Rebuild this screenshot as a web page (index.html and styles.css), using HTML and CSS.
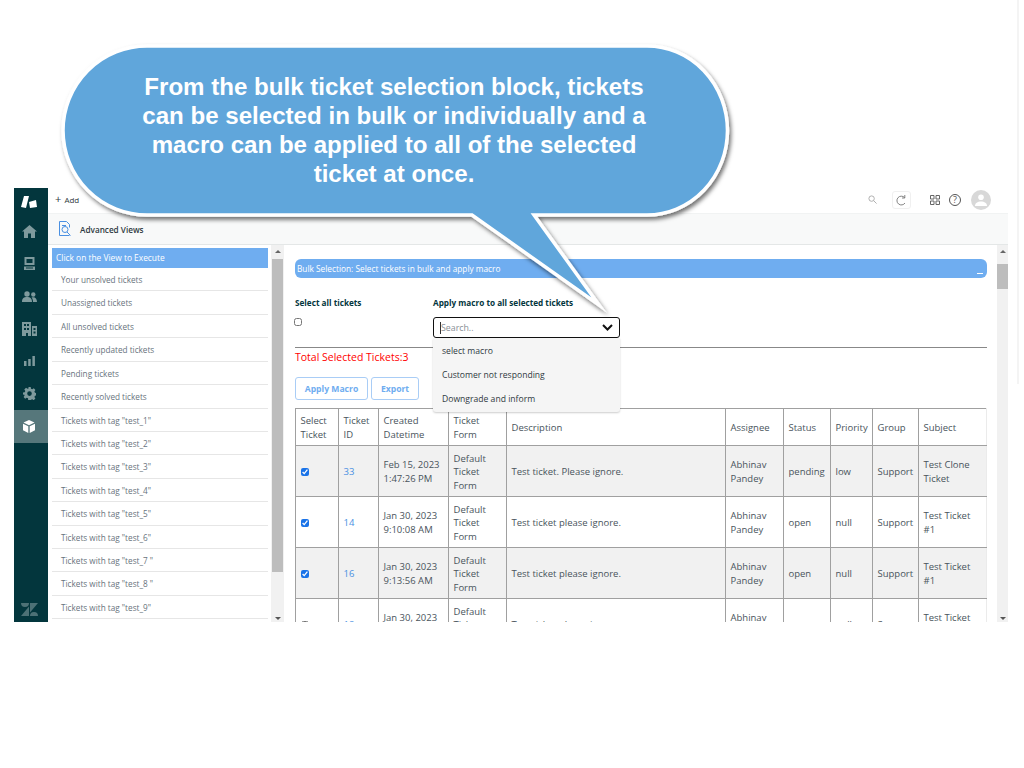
FILE: index.html
```html
<!DOCTYPE html>
<html lang="en">
<head>
<meta charset="utf-8">
<title>Advanced Views</title>
<link rel="stylesheet" href="styles.css">
</head>
<body>
<div class="edge-line"></div>
<div class="app">
  <nav class="rail">
    <div class="rail-item logo">
      <svg width="16" height="12" viewBox="0 0 16 12"><path d="M3 0H8L5 12L0 11z" fill="#fff"/><path d="M8 6l7-2 1 7-7 1z" fill="#fff"/></svg>
    </div>
    <div class="rail-item">
      <svg width="15" height="13" viewBox="0 0 15 13"><path d="M7.500 0L15 6.500h-2V13H9V8.500H6V13H2V6.500H0z" class="ic"/></svg>
    </div>
    <div class="rail-item">
      <svg width="11" height="13" viewBox="0 0 11 13"><path d="M1.500 1h8v6h-8z" fill="none" stroke="#7f9a9d" stroke-width="2"/><path d="M0 9.500h11V13H0z" class="ic"/><path d="M2 11h7" stroke="#03363d"/></svg>
    </div>
    <div class="rail-item">
      <svg width="15" height="11" viewBox="0 0 15 11"><circle cx="5" cy="3" r="2.700" class="ic"/><circle cx="11.300" cy="3.500" r="2.200" class="ic"/><path d="M0 11c0-4 2-5 5-5s5 1 5 5zM11 11c0-2-.5-3.500-1.500-4.500 3-1 5.500.5 5.500 4.500z" class="ic"/></svg>
    </div>
    <div class="rail-item">
      <svg width="15" height="14" viewBox="0 0 15 14"><path d="M0 0h9v14H6v-3H4v3H0zM2 2v2h2V2zm3 0v2h2V2zM2 6v2h2V6zm3 0v2h2V6zM10 4h5v10h-5zm1.500 2v2h2V6zm0 3.500v2h2v-2z" class="ic" fill-rule="evenodd"/></svg>
    </div>
    <div class="rail-item">
      <svg width="11" height="10" viewBox="0 0 11 10"><path d="M0 5h2.500v5H0zM4.200 3h2.500v7H4.200zM8.400 0h2.500v10H8.400z" class="ic"/></svg>
    </div>
    <div class="rail-item">
      <svg width="13" height="13" viewBox="0 0 13 13"><path d="M5.300 0h2.400l.3 1.700 1.300.6 1.500-1 1.600 1.700-1 1.400.6 1.400 1.700.3v2.400l-1.700.3-.6 1.300 1 1.500-1.700 1.600-1.400-1-1.400.6-.3 1.700H5.300L5 11.300l-1.300-.6-1.500 1-1.600-1.700 1-1.400-.6-1.400L0 7.900V5.500l1.700-.3.6-1.300-1-1.500L3 .8l1.400 1 1.400-.6zM6.500 4.300a2.300 2.300 0 1 0 0 4.600 2.300 2.300 0 0 0 0-4.600z" class="ic" fill-rule="evenodd"/></svg>
    </div>
    <div class="rail-item active">
      <svg width="12" height="13" viewBox="0 0 12 13"><path d="M6 0l5.500 2.600L6 5.200.5 2.600zM0 3.800l5.300 2.500V13L0 10.200zM12 3.800L6.700 6.300V13l5.300-2.800z" fill="#fff"/></svg>
    </div>
    <div class="rail-spacer"></div>
    <div class="rail-item zlogo">
      <svg width="17" height="13" viewBox="0 0 17 13"><path d="M0 0h8a4 4 0 0 1-8 0zM8 3.600V13H0zM9 0h8L9 9.400zM9 13a4 4 0 0 1 8 0z" class="ic-dim"/></svg>
    </div>
  </nav>

  <div class="workspace">
    <header class="topbar">
      <span class="add"><span class="plus">+</span> Add</span>
      <div class="top-tools">
        <svg class="t-search" width="9" height="9" viewBox="0 0 10 10"><circle cx="4" cy="4" r="3" fill="none" stroke="#a8a8a8"/><path d="M6.300 6.300L9.500 9.500" stroke="#a8a8a8"/></svg>
        <span class="refresh">
          <svg width="11" height="11" viewBox="0 0 11 11"><path d="M8.500 2.500A4.400 4.400 0 1 0 9 8" fill="none" stroke="#666" stroke-width=".8"/><path d="M8.800 0v3H6" fill="none" stroke="#666" stroke-width=".8"/></svg>
        </span>
        <svg class="t-grid" width="10" height="10" viewBox="0 0 10 10"><path d="M.5.500h3.500v3.500H.5zM6 .5h3.500v3.500H6zM.5 6h3.500v3.500H.5zM6 6h3.500v3.500H6z" fill="none" stroke="#666"/></svg>
        <span class="help">?</span>
        <span class="avatar">
          <svg width="12" height="12" viewBox="0 0 12 12"><circle cx="6" cy="3.300" r="2.800" fill="#fff"/><path d="M0 12c0-3 2.500-4.500 6-4.500S12 9 12 12z" fill="#fff"/></svg>
        </span>
      </div>
    </header>
    <div class="titlebar">
      <svg width="13" height="16" viewBox="0 0 13 16"><path d="M10.500 14.500H.5V.5h7l3 3v3" fill="none" stroke="#4a90e2"/><circle cx="6" cy="8.500" r="3" fill="none" stroke="#4a90e2"/><path d="M8 11l3.500 3.500M3 4.500h4" stroke="#4a90e2"/></svg>
      <span class="title">Advanced Views</span>
    </div>
    <div class="content">
      <aside class="views">
        <div class="views-head">Click on the View to Execute</div>
        <div class="view">Your unsolved tickets</div>
        <div class="view">Unassigned tickets</div>
        <div class="view">All unsolved tickets</div>
        <div class="view">Recently updated tickets</div>
        <div class="view">Pending tickets</div>
        <div class="view">Recently solved tickets</div>
        <div class="view">Tickets with tag "test_1"</div>
        <div class="view">Tickets with tag "test_2"</div>
        <div class="view">Tickets with tag "test_3"</div>
        <div class="view">Tickets with tag "test_4"</div>
        <div class="view">Tickets with tag "test_5"</div>
        <div class="view">Tickets with tag "test_6"</div>
        <div class="view">Tickets with tag "test_7 "</div>
        <div class="view">Tickets with tag "test_8 "</div>
        <div class="view">Tickets with tag "test_9"</div>
      </aside>
      <div class="scrollbar left-bar"><span class="arrow up"></span><span class="thumb"></span><span class="arrow down"></span></div>
      <main class="panel">
        <div class="bulk-bar"><span>Bulk Selection: Select tickets in bulk and apply macro</span><span class="minimize"></span></div>
        <div class="selectors">
          <div class="sel-all">
            <div class="label">Select all tickets</div>
            <input class="check" type="checkbox">
          </div>
          <div class="sel-macro">
            <div class="label">Apply macro to all selected tickets</div>
            <div class="search-box">
              <span class="caret"></span><span class="ph">Search..</span>
              <svg width="11" height="7" viewBox="0 0 11 7"><path d="M1 1l4.500 4.500L10 1" fill="none" stroke="#111" stroke-width="2"/></svg>
            </div>
            <div class="menu">
              <div class="menu-item">select macro</div>
              <div class="menu-item">Customer not responding</div>
              <div class="menu-item">Downgrade and inform</div>
            </div>
          </div>
        </div>
        <hr class="rule">
        <div class="total">Total Selected Tickets:3</div>
        <div class="actions">
          <button class="btn b1">Apply Macro</button>
          <button class="btn b2">Export</button>
        </div>
        <table class="grid">
          <colgroup>
            <col class="c1"><col class="c2"><col class="c3"><col class="c4"><col class="c5"><col class="c6"><col class="c7"><col class="c8"><col class="c9"><col class="c10">
          </colgroup>
          <thead>
            <tr><th>Select Ticket</th><th>Ticket ID</th><th>Created Datetime</th><th>Ticket Form</th><th>Description</th><th>Assignee</th><th>Status</th><th>Priority</th><th>Group</th><th>Subject</th></tr>
          </thead>
          <tbody>
            <tr><td><input class="check" type="checkbox" checked></td><td class="id">33</td><td>Feb 15, 2023 1:47:26 PM</td><td>Default Ticket Form</td><td>Test ticket. Please ignore.</td><td>Abhinav Pandey</td><td>pending</td><td>low</td><td>Support</td><td>Test Clone Ticket</td></tr>
            <tr><td><input class="check" type="checkbox" checked></td><td class="id">14</td><td>Jan 30, 2023 9:10:08 AM</td><td>Default Ticket Form</td><td>Test ticket please ignore.</td><td>Abhinav Pandey</td><td>open</td><td>null</td><td>Support</td><td>Test Ticket #1</td></tr>
            <tr><td><input class="check" type="checkbox" checked></td><td class="id">16</td><td>Jan 30, 2023 9:13:56 AM</td><td>Default Ticket Form</td><td>Test ticket please ignore.</td><td>Abhinav Pandey</td><td>open</td><td>null</td><td>Support</td><td>Test Ticket #1</td></tr>
            <tr><td><input class="check" type="checkbox"></td><td class="id">18</td><td>Jan 30, 2023 9:15:02 AM</td><td>Default Ticket Form</td><td>Test ticket please ignore.</td><td>Abhinav Pandey</td><td>open</td><td>null</td><td>Support</td><td>Test Ticket #1</td></tr>
          </tbody>
        </table>
      </main>
      <div class="scrollbar right-bar"><span class="arrow up"></span><span class="thumb"></span><span class="arrow down"></span></div>
    </div>
  </div>
</div>

<div class="callout">
  <svg class="bubble" width="700" height="290" viewBox="0 0 700 290">
    <defs>
      <filter id="sh" x="-5%" y="-5%" width="110%" height="115%"><feDropShadow dx="2" dy="3" stdDeviation="2.200" flood-color="#000" flood-opacity=".55"/></filter>
    </defs>
    <path d="M92 10H592A80.500 84.500 0 0 1 592 179H479L544 269L417 179H92A84 84.500 0 0 1 92 10Z" fill="#61a6db" stroke="#fff" stroke-width="3.500" stroke-miterlimit="20" filter="url(#sh)"/>
  </svg>
  <p class="callout-text">From the bulk ticket selection block, tickets can be selected in bulk or individually and a macro can be applied to all of the selected ticket at once.</p>
</div>
</body>
</html>
```
FILE: styles.css
```css
* { box-sizing: border-box; }
html, body { margin: 0; padding: 0; background: #fff; }
body { height: 768px; overflow: hidden; padding: 188px 0 0 14px; font-family: "Open Sans", "Noto Sans", sans-serif; color: #49545c; }

.edge-line { position: absolute; top: 0; left: 1017px; width: 2px; height: 384px; background: #f4f4f4; }

.app { display: flex; width: 994px; height: 434px; overflow: hidden; background: #fff; }

.rail { width: 34px; flex: none; background: #03363d; display: flex; flex-direction: column; }
.rail-item { height: 32.500px; display: flex; align-items: center; justify-content: center; flex: none; padding-right: 4px; }
.rail-item.logo { height: 27px; }
.rail-item.active { background: #56777b; }
.rail-spacer { flex: 1; }
.rail-item.zlogo { height: 24px; align-items: flex-start; padding-top: 5px; }
.ic { fill: #7f9a9d; }
.ic-dim { fill: #4d7176; }

.workspace { flex: 1; min-width: 0; display: flex; flex-direction: column; }

.topbar { height: 25px; flex: none; display: flex; align-items: center; justify-content: space-between; padding: 0 17px 5px 7px; background: #fff; }
.add { font-size: 8px; color: #2f3941; word-spacing: 1px; }
.plus { font-size: 11px; }
.top-tools { display: flex; align-items: center; padding-top: 4px; }
.t-search { margin-right: 15px; margin-top: -2px; }
.refresh { width: 19px; height: 18px; border: 1px solid #f0f0f0; border-radius: 3px; display: flex; align-items: center; justify-content: center; margin-right: 19px; }
.t-grid { margin-right: 9px; }
.help { width: 12px; height: 12px; border: 1px solid #555; border-radius: 50%; font-size: 9px; line-height: 10px; text-align: center; color: #555; margin-right: 10px; }
.avatar { width: 20px; height: 20px; border-radius: 50%; background: #d8d8d8; display: flex; align-items: flex-end; justify-content: center; padding-bottom: 4px; }

.titlebar { height: 32px; flex: none; background: #f8f9f9; border-top: 1px solid #f1f3f3; border-bottom: 1px solid #e4e7e7; display: flex; align-items: center; padding-left: 11px; }
.title { font-size: 8.200px; font-weight: 600; color: #2f3941; margin-left: 8px; }

.content { flex: 1; min-height: 0; display: flex; overflow: hidden; }

.views { width: 216px; flex: none; margin: 3px 0 0 4px; }
.views-head { height: 20px; background: #6fadf0; color: #fff; font-size: 8.400px; line-height: 20px; padding-left: 4px; }
.view { height: 23.430px; border-bottom: 1.500px solid #e6e6e6; font-size: 8.200px; line-height: 24px; padding-left: 9px; color: #68737d; background: #fff; }

.scrollbar { flex: none; background: #f1f1f1; position: relative; display: flex; flex-direction: column; align-items: center; }
.left-bar { width: 13px; margin-left: 3px; padding-top: 14px; }
.left-bar .thumb { width: 11px; height: 313px; background: #bdbdbd; display: block; }
.right-bar { width: 11px; padding-top: 19px; }
.right-bar .thumb { width: 11px; height: 25px; background: #bdbdbd; display: block; }
.arrow { position: absolute; left: 50%; margin-left: -3px; width: 0; height: 0; border-left: 3px solid transparent; border-right: 3px solid transparent; }
.arrow.up { top: 5px; border-bottom: 3px solid #666; }
.arrow.down { bottom: 2px; border-top: 3px solid #555; }

.panel { flex: 1; min-width: 0; padding: 14px 10px 0 11px; overflow: hidden; }

.bulk-bar { height: 19px; background: #6fadf0; border-radius: 6px; color: #fff; font-size: 8.300px; line-height: 19px; padding: 0 4px 0 2px; display: flex; justify-content: space-between; }
.minimize { width: 6px; height: 1px; background: #fff; margin: 14px 0 0; }

.selectors { display: flex; margin-top: 19px; height: 50px; }
.sel-all { width: 138px; }
.sel-macro { width: 187px; position: relative; }
.label { font-size: 8.200px; font-weight: 700; color: #03363d; line-height: 12px; }
.check { display: block; margin: 0; width: 8px; height: 8px; accent-color: #1a73e8; }
.sel-all .check { margin: 9px 0 0 -1px; }
.search-box { margin-top: 8px; height: 21px; border: 1px solid #111; border-radius: 3px; display: flex; align-items: center; padding: 0 6px; background: #fff; }
.caret { width: 1px; height: 12px; background: #333; }
.ph { flex: 1; font-size: 8.800px; color: #8a9096; }
.menu { position: absolute; top: 41px; left: 0; width: 187px; height: 74px; background: #f5f5f5; border-radius: 0 0 3px 3px; box-shadow: 0 1px 2px rgba(0,0,0,.2); padding-top: 1px; z-index: 2; }
.menu-item { height: 24px; line-height: 24px; padding-left: 9px; font-size: 8.600px; color: #2f3941; }

.rule { border: 0; border-top: 1px solid #888; margin: 0; }
.total { font-size: 10.500px; color: #f00; margin-top: 1px; height: 16px; line-height: 16px; }

.actions { display: flex; gap: 3px; margin-top: 12px; }
.btn { height: 23px; background: #fff; border: 1px solid #a9cdf6; border-radius: 3px; color: #6fadf0; font-family: inherit; font-size: 8.600px; font-weight: 700; padding: 0; }
.b1 { width: 73px; }
.b2 { width: 48px; }

.grid { border-collapse: collapse; table-layout: fixed; width: 691px; margin-top: 8px; font-size: 9.500px; line-height: 13.600px; color: #49545c; }
.c1 { width: 43px; } .c2 { width: 40px; } .c3 { width: 70px; } .c4 { width: 58px; } .c5 { width: 219px; }
.c6 { width: 58px; } .c7 { width: 47px; } .c8 { width: 42px; } .c9 { width: 46px; } .c10 { width: 68px; }
.grid th, .grid td { border: 1px solid #a0a0a0; padding: 2px 4.500px 0; text-align: left; font-weight: 400; vertical-align: middle; }
.grid th { height: 37px; }
.grid td { height: 51px; }
.grid th:nth-child(3), .grid td:nth-child(3), .grid th:nth-child(7), .grid td:nth-child(7), .grid th:nth-child(9), .grid td:nth-child(9) { border-left-color: #ebebeb; }
.grid th:last-child, .grid td:last-child { border-right-color: #ebebeb; }
.grid tbody tr:nth-child(odd) td { background: #f1f1f1; }
.grid .id { color: #4a90e2; }

.callout { position: absolute; left: 55px; top: 36px; width: 700px; height: 290px; }
.bubble { position: absolute; left: 0; top: 0; display: block; }
.callout-text { position: absolute; left: 73px; top: 36px; width: 532px; margin: 0; font-family: "Liberation Sans", Arial, sans-serif; font-weight: 700; font-size: 24.100px; line-height: 29px; text-align: center; color: #fff; }
```
